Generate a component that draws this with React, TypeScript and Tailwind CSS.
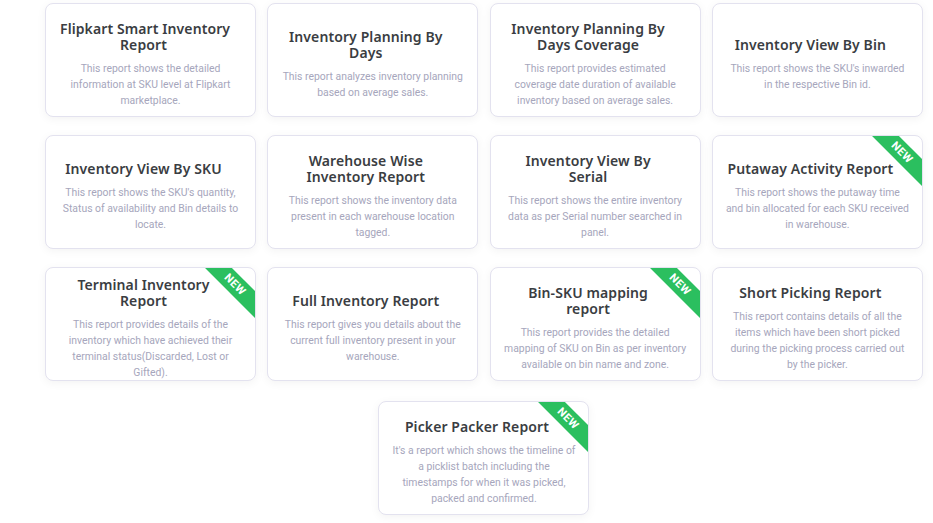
import React from "react"

type Report = {
    title: string[]
    body: string[]
    isNew?: boolean
}

const reports: Report[] = [
    {
        title: ["Flipkart Smart Inventory", "Report"],
        body: ["This report shows the detailed", "information at SKU level at Flipkart", "marketplace."],
    },
    {
        title: ["Inventory Planning By", "Days"],
        body: ["This report analyzes inventory planning", "based on average sales."],
    },
    {
        title: ["Inventory Planning By", "Days Coverage"],
        body: ["This report provides estimated", "coverage date duration of available", "inventory based on average sales."],
    },
    {
        title: ["Inventory View By Bin"],
        body: ["This report shows the SKU's inwarded", "in the respective Bin id."],
    },
    {
        title: ["Inventory View By SKU"],
        body: ["This report shows the SKU's quantity,", "Status of availability and Bin details to", "locate."],
    },
    {
        title: ["Warehouse Wise", "Inventory Report"],
        body: ["This report shows the inventory data", "present in each warehouse location", "tagged."],
    },
    {
        title: ["Inventory View By", "Serial"],
        body: ["This report shows the entire inventory", "data as per Serial number searched in", "panel."],
    },
    {
        title: ["Putaway Activity Report"],
        body: ["This report shows the putaway time", "and bin allocated for each SKU received", "in warehouse."],
        isNew: true,
    },
    {
        title: ["Terminal Inventory", "Report"],
        body: ["This report provides details of the", "inventory which have achieved their", "terminal status(Discarded, Lost or", "Gifted)."],
        isNew: true,
    },
    {
        title: ["Full Inventory Report"],
        body: ["This report gives you details about the", "current full inventory present in your", "warehouse."],
    },
    {
        title: ["Bin-SKU mapping", "report"],
        body: ["This report provides the detailed", "mapping of SKU on Bin as per inventory", "available on bin name and zone."],
        isNew: true,
    },
    {
        title: ["Short Picking Report"],
        body: ["This report contains details of all the", "items which have been short picked", "during the picking process carried out", "by the picker."],
    },
]

const pickerPacker: Report = {
    title: ["Picker Packer Report"],
    body: ["It's a report which shows the timeline of", "a picklist batch including the", "timestamps for when it was picked,", "packed and confirmed."],
    isNew: true,
}

// lines joined with <br /> so the wrapping matches the screenshot
function Lines({ lines }: { lines: string[] }) {
    return (
        <>
            {lines.map((line, i) => (
                <React.Fragment key={line}>
                    {i > 0 && <br />}
                    {line}
                </React.Fragment>
            ))}
        </>
    )
}

function ReportCard({ report }: { report: Report }) {
    return (
        <div className="relative flex h-[114px] w-[211px] flex-col justify-center overflow-hidden rounded-lg border border-[#e3e2ef] bg-white pt-[10px] shadow-[0_2px_10px_rgba(0,0,0,0.05)]">
            {report.isNew && (
                <div className="absolute right-[-20px] top-[7px] flex h-[19px] w-[80px] rotate-45 items-center justify-center bg-[#2bbf5f]">
                    <span className="font-['Roboto',sans-serif] text-[11px] font-bold leading-none tracking-[0.5px] text-white">NEW</span>
                </div>
            )}
            <p className="whitespace-nowrap pl-[14px] pr-[28px] text-center font-['Noto_Sans',sans-serif] text-[14px] font-semibold leading-[16px] tracking-[0.1px] text-[#3a3d42]">
                <Lines lines={report.title} />
            </p>
            <p className="mt-2 whitespace-nowrap px-1 text-center font-['Roboto',sans-serif] text-[10.4px] leading-[16px] text-[#a6a6bc]">
                <Lines lines={report.body} />
            </p>
        </div>
    )
}

export default function App() {
    return (
        <div className="min-h-[523px] w-full bg-white pl-[45px] pt-[3px]">
            <div className="grid w-[878px] grid-cols-[repeat(4,211px)] gap-x-[11.3px] gap-y-[18px]">
                {reports.map((r) => (
                    <ReportCard key={r.title.join(" ")} report={r} />
                ))}
                <div className="col-span-4 mt-[2px] flex justify-center">
                    <ReportCard report={pickerPacker} />
                </div>
            </div>
        </div>
    )
}
